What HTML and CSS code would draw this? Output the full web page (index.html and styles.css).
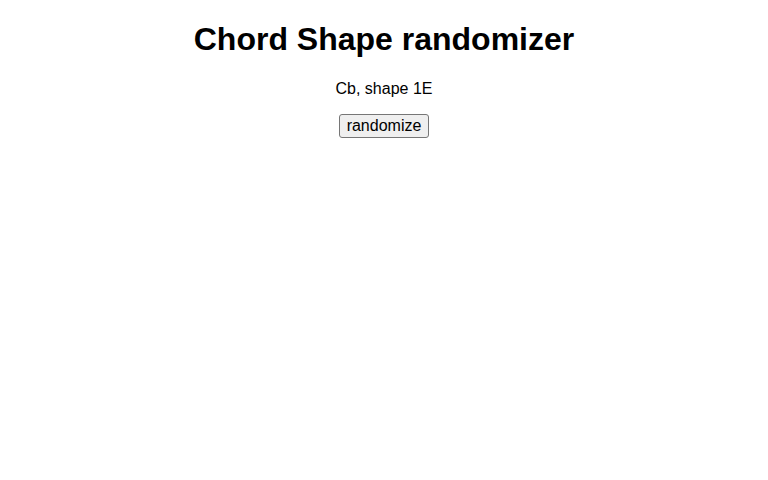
FILE: index.html
```html
<!DOCTYPE html>
<html lang="en">
<head>
<meta charset="utf-8">
<title>Chord Shape randomizer</title>
<link rel="stylesheet" href="styles.css">
</head>
<body>
<main class="app">
  <h1 class="title">Chord Shape randomizer</h1>
  <p class="result">Cb, shape 1E</p>
  <button class="randomize" type="button">randomize</button>
</main>
</body>
</html>
```
FILE: styles.css
```css
body {
  margin: 0;
  font-family: "Liberation Sans", Arial, sans-serif;
  color: #000;
  background: #fff;
}

.app {
  text-align: center;
}

.title {
  font-size: 32px;
  font-weight: bold;
  margin: 21.44px 0;
}

.result {
  font-size: 16px;
  margin: 16px 0;
}

.randomize {
  font-family: "Liberation Sans", Arial, sans-serif;
  font-size: 16px;
  color: #000;
  background: #efefef;
  border: 1px solid #767676;
  border-radius: 3px;
  padding: 2px 7px;
  line-height: normal;
}
```
